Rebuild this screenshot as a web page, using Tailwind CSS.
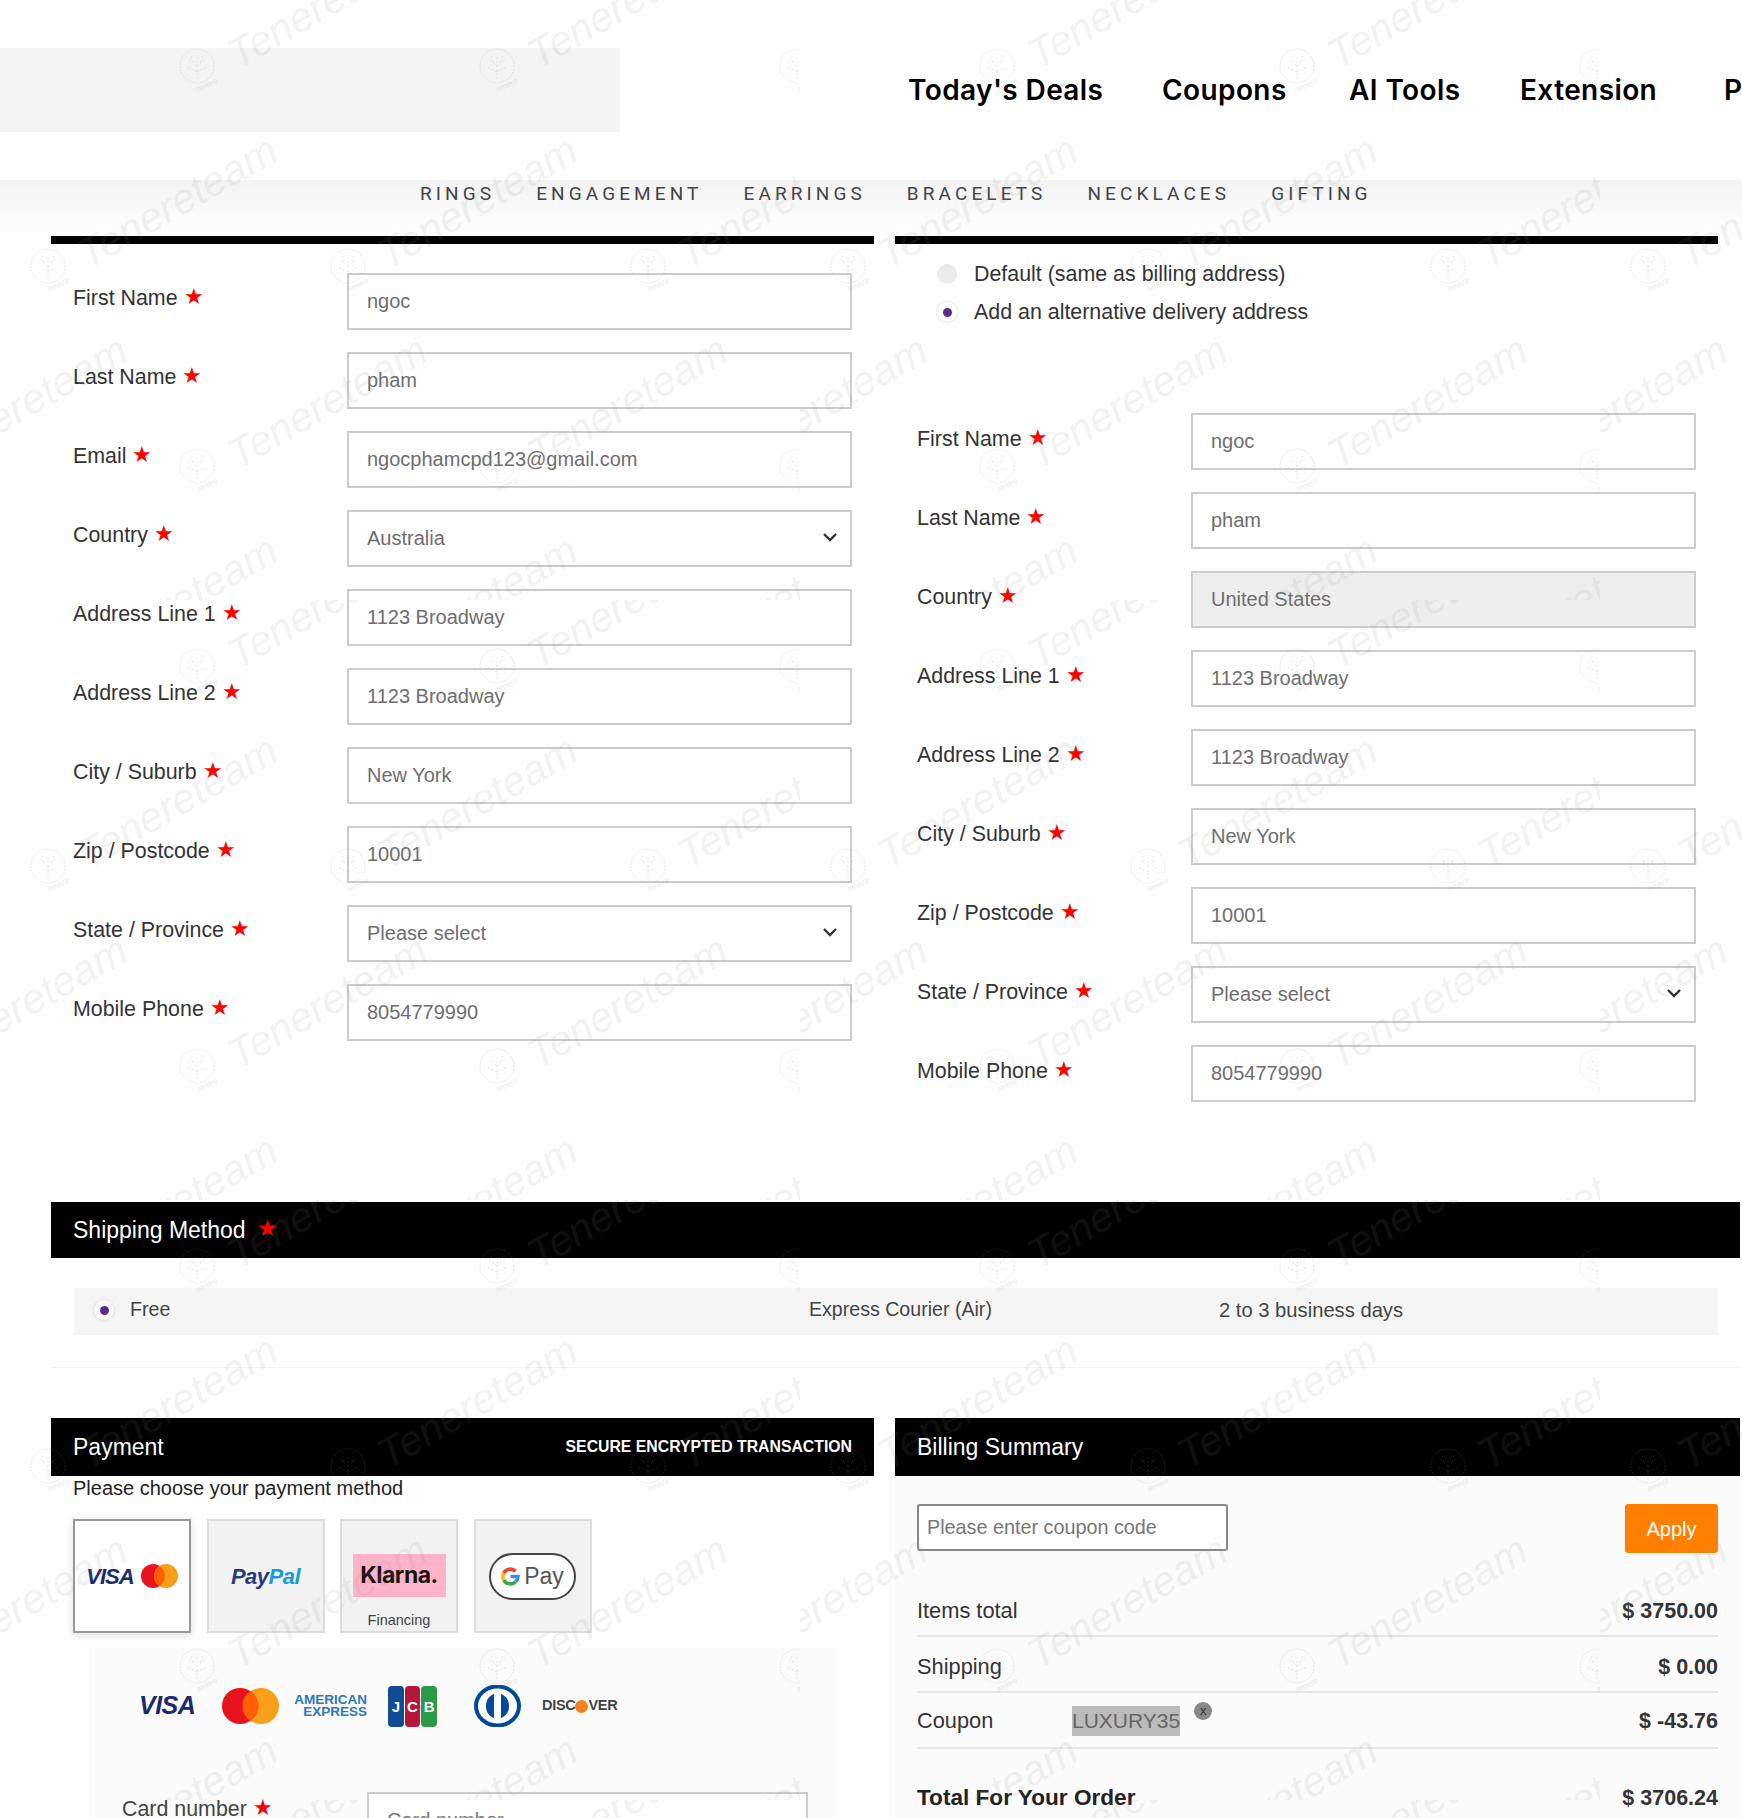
<!DOCTYPE html>
<html lang="en">
<head>
  <meta charset="UTF-8" />
  <title>Checkout</title>
  <script src="https://cdn.jsdelivr.net/npm/@tailwindcss/browser@4"></script>
</head>
<body class="relative w-[1742px] h-[1818px] overflow-hidden bg-white text-[#333] font-['Liberation_Sans',Arial,sans-serif] text-[20px]">

  <!-- Top header -->
  <header class="flex h-[180px] whitespace-nowrap">
    <div class="w-[620px] h-[84px] mt-[48px] shrink-0 bg-[#f4f4f4]"></div>
    <nav class="flex gap-[60px] ml-[288px] pt-[70px] font-['Inter',sans-serif] font-semibold text-[28px] tracking-[0.4px] leading-[40px] text-black">
      <a class="w-[194px]">Today's Deals</a>
      <a class="w-[127px]">Coupons</a>
      <a class="w-[111px]">AI Tools</a>
      <a class="w-[144px]">Extension</a>
      <a>P</a>
    </nav>
  </header>

  <!-- Category nav -->
  <div class="h-[56px] bg-gradient-to-b from-[#f3f3f3] to-white flex gap-[41px] pl-[420px] pt-[2px] font-['Roboto',sans-serif] text-[19px] leading-[24px] tracking-[4.1px] text-[#444]">
    <a>RINGS</a><a>ENGAGEMENT</a><a>EARRINGS</a><a>BRACELETS</a><a>NECKLACES</a><a>GIFTING</a>
  </div>

  <!-- Billing + delivery address -->
  <div class="flex gap-[21px] pl-[51px]">
    <section class="w-[823px] border-t-8 border-black pt-[29px] pl-[22px] flex flex-col gap-[22px]">
      <div class="flex"><label class="w-[274px] text-[21.4px] leading-[50px]">First Name <span class="relative -top-[1px] text-[22px] leading-none text-[#f00]">★</span></label><input value="ngoc" class="w-[505px] h-[57px] border-2 border-[#ccc] px-[18px] text-[#6e6e6e]" /></div>
      <div class="flex"><label class="w-[274px] text-[21.4px] leading-[50px]">Last Name <span class="relative -top-[1px] text-[22px] leading-none text-[#f00]">★</span></label><input value="pham" class="w-[505px] h-[57px] border-2 border-[#ccc] px-[18px] text-[#6e6e6e]" /></div>
      <div class="flex"><label class="w-[274px] text-[21.4px] leading-[50px]">Email <span class="relative -top-[1px] text-[22px] leading-none text-[#f00]">★</span></label><input value="ngocphamcpd123@gmail.com" class="w-[505px] h-[57px] border-2 border-[#ccc] px-[18px] text-[#6e6e6e]" /></div>
      <div class="flex"><label class="w-[274px] text-[21.4px] leading-[50px]">Country <span class="relative -top-[1px] text-[22px] leading-none text-[#f00]">★</span></label>
        <div class="relative w-[505px] h-[57px] border-2 border-[#ccc] px-[18px] leading-[53px] text-[#6e6e6e]">Australia
          <svg class="absolute right-[12px] top-[19px] w-[16px] h-[12px]" viewBox="0 0 16 12" fill="none" stroke="#333" stroke-width="2.4"><path d="M2 3l6 6 6-6" /></svg>
        </div>
      </div>
      <div class="flex"><label class="w-[274px] text-[21.4px] leading-[50px]">Address Line 1 <span class="relative -top-[1px] text-[22px] leading-none text-[#f00]">★</span></label><input value="1123 Broadway" class="w-[505px] h-[57px] border-2 border-[#ccc] px-[18px] text-[#6e6e6e]" /></div>
      <div class="flex"><label class="w-[274px] text-[21.4px] leading-[50px]">Address Line 2 <span class="relative -top-[1px] text-[22px] leading-none text-[#f00]">★</span></label><input value="1123 Broadway" class="w-[505px] h-[57px] border-2 border-[#ccc] px-[18px] text-[#6e6e6e]" /></div>
      <div class="flex"><label class="w-[274px] text-[21.4px] leading-[50px]">City / Suburb <span class="relative -top-[1px] text-[22px] leading-none text-[#f00]">★</span></label><input value="New York" class="w-[505px] h-[57px] border-2 border-[#ccc] px-[18px] text-[#6e6e6e]" /></div>
      <div class="flex"><label class="w-[274px] text-[21.4px] leading-[50px]">Zip / Postcode <span class="relative -top-[1px] text-[22px] leading-none text-[#f00]">★</span></label><input value="10001" class="w-[505px] h-[57px] border-2 border-[#ccc] px-[18px] text-[#6e6e6e]" /></div>
      <div class="flex"><label class="w-[274px] text-[21.4px] leading-[50px]">State / Province <span class="relative -top-[1px] text-[22px] leading-none text-[#f00]">★</span></label>
        <div class="relative w-[505px] h-[57px] border-2 border-[#ccc] px-[18px] leading-[53px] text-[#6e6e6e]">Please select
          <svg class="absolute right-[12px] top-[19px] w-[16px] h-[12px]" viewBox="0 0 16 12" fill="none" stroke="#333" stroke-width="2.4"><path d="M2 3l6 6 6-6" /></svg>
        </div>
      </div>
      <div class="flex"><label class="w-[274px] text-[21.4px] leading-[50px]">Mobile Phone <span class="relative -top-[1px] text-[22px] leading-none text-[#f00]">★</span></label><input value="8054779990" class="w-[505px] h-[57px] border-2 border-[#ccc] px-[18px] text-[#6e6e6e]" /></div>
    </section>

    <section class="w-[823px] border-t-8 border-black pt-[11px] pl-[22px]">
      <div class="flex items-center h-[38px] pl-[20px] gap-[17px] text-[21.4px]"><span class="w-[20px] h-[20px] rounded-full bg-[#ebebeb]"></span>Default (same as billing address)</div>
      <div class="flex items-center h-[38px] pl-[20px] gap-[17px] text-[21.4px]"><span class="w-[20px] h-[20px] rounded-full bg-white shadow-[0_0_3px_#ccc] flex items-center justify-center"><span class="w-[9px] h-[9px] rounded-full bg-[#5b2d90]"></span></span>Add an alternative delivery address</div>
      <div class="flex flex-col gap-[22px] mt-[82px]">
        <div class="flex"><label class="w-[274px] text-[21.4px] leading-[52px]">First Name <span class="relative -top-[1px] text-[22px] leading-none text-[#f00]">★</span></label><input value="ngoc" class="w-[505px] h-[57px] border-2 border-[#ccc] px-[18px] text-[#6e6e6e]" /></div>
        <div class="flex"><label class="w-[274px] text-[21.4px] leading-[52px]">Last Name <span class="relative -top-[1px] text-[22px] leading-none text-[#f00]">★</span></label><input value="pham" class="w-[505px] h-[57px] border-2 border-[#ccc] px-[18px] text-[#6e6e6e]" /></div>
        <div class="flex"><label class="w-[274px] text-[21.4px] leading-[52px]">Country <span class="relative -top-[1px] text-[22px] leading-none text-[#f00]">★</span></label><input value="United States" disabled class="w-[505px] h-[57px] border-2 border-[#ccc] bg-[#eee] px-[18px] text-[#6e6e6e]" /></div>
        <div class="flex"><label class="w-[274px] text-[21.4px] leading-[52px]">Address Line 1 <span class="relative -top-[1px] text-[22px] leading-none text-[#f00]">★</span></label><input value="1123 Broadway" class="w-[505px] h-[57px] border-2 border-[#ccc] px-[18px] text-[#6e6e6e]" /></div>
        <div class="flex"><label class="w-[274px] text-[21.4px] leading-[52px]">Address Line 2 <span class="relative -top-[1px] text-[22px] leading-none text-[#f00]">★</span></label><input value="1123 Broadway" class="w-[505px] h-[57px] border-2 border-[#ccc] px-[18px] text-[#6e6e6e]" /></div>
        <div class="flex"><label class="w-[274px] text-[21.4px] leading-[52px]">City / Suburb <span class="relative -top-[1px] text-[22px] leading-none text-[#f00]">★</span></label><input value="New York" class="w-[505px] h-[57px] border-2 border-[#ccc] px-[18px] text-[#6e6e6e]" /></div>
        <div class="flex"><label class="w-[274px] text-[21.4px] leading-[52px]">Zip / Postcode <span class="relative -top-[1px] text-[22px] leading-none text-[#f00]">★</span></label><input value="10001" class="w-[505px] h-[57px] border-2 border-[#ccc] px-[18px] text-[#6e6e6e]" /></div>
        <div class="flex"><label class="w-[274px] text-[21.4px] leading-[52px]">State / Province <span class="relative -top-[1px] text-[22px] leading-none text-[#f00]">★</span></label>
          <div class="relative w-[505px] h-[57px] border-2 border-[#ccc] px-[18px] leading-[53px] text-[#6e6e6e]">Please select
            <svg class="absolute right-[12px] top-[19px] w-[16px] h-[12px]" viewBox="0 0 16 12" fill="none" stroke="#333" stroke-width="2.4"><path d="M2 3l6 6 6-6" /></svg>
          </div>
        </div>
        <div class="flex"><label class="w-[274px] text-[21.4px] leading-[52px]">Mobile Phone <span class="relative -top-[1px] text-[22px] leading-none text-[#f00]">★</span></label><input value="8054779990" class="w-[505px] h-[57px] border-2 border-[#ccc] px-[18px] text-[#6e6e6e]" /></div>
      </div>
    </section>
  </div>

  <!-- Shipping method -->
  <div class="ml-[51px] w-[1689px] mt-[100px] h-[56px] bg-black text-white text-[23px] leading-[56px] pl-[22px]">Shipping Method <span class="relative -top-[2px] ml-[5px] text-[23px] leading-none text-[#f00]">★</span></div>
  <div class="ml-[74px] w-[1644px] mt-[30px] h-[47px] pb-[3px] bg-[#f5f5f5] flex items-center text-[19.6px] text-[#444]">
    <span class="ml-[20px] w-[20px] h-[20px] rounded-full bg-white shadow-[0_0_3px_#ccc] flex items-center justify-center"><span class="w-[9px] h-[9px] rounded-full bg-[#5b2d90]"></span></span>
    <span class="ml-[16px] w-[679px]">Free</span>
    <span class="w-[410px]">Express Courier (Air)</span>
    <span class="text-[20.2px]">2 to 3 business days</span>
  </div>
  <div class="ml-[51px] w-[1689px] mt-[32px] h-px bg-[#f3f3f3]"></div>

  <!-- Payment + billing summary -->
  <div class="flex gap-[21px] pl-[51px] mt-[50px]">
    <section class="w-[823px]">
      <div class="h-[58px] bg-black text-white flex items-center justify-between pl-[22px] pr-[22px]">
        <span class="text-[23px]">Payment</span>
        <span class="text-[15.8px] font-bold">SECURE ENCRYPTED TRANSACTION</span>
      </div>
      <p class="pl-[22px] leading-[24px] text-[#222]">Please choose your payment method</p>

      <div class="flex gap-[15.5px] ml-[22px] mt-[19px]">
        <div class="w-[118px] h-[114px] border-2 border-[#999] bg-white shadow-[0_2px_8px_#ddd] flex items-center justify-center gap-[7px]">
          <span class="italic font-bold text-[22px] tracking-[-1px] text-[#1a2a6c]">VISA</span>
          <svg class="w-[37px] h-[24px]" viewBox="0 0 37 24"><circle cx="12" cy="12" r="12" fill="#e8131c" /><circle cx="25" cy="12" r="12" fill="#f79e1b" /><path d="M18.5 2a12 12 0 0 1 0 20 12 12 0 0 1 0-20z" fill="#ff5f00" /></svg>
        </div>
        <div class="w-[118px] h-[114px] border-2 border-[#ddd] bg-[#f2f2f2] flex items-center justify-center italic font-bold text-[22px] tracking-[-0.5px]">
          <span class="text-[#253b80]">Pay</span><span class="text-[#179bd7]">Pal</span>
        </div>
        <div class="w-[118px] h-[114px] border-2 border-[#ddd] bg-[#f2f2f2] flex flex-col items-center pt-[33px]">
          <span class="w-[93px] h-[43px] bg-[#ffb3c7] flex items-center justify-center font-['Inter',sans-serif] font-bold text-[23px] tracking-[-0.5px] text-[#17120f]">Klarna.</span>
          <span class="mt-[14px] text-[14.5px] leading-[18px] text-[#444]">Financing</span>
        </div>
        <div class="w-[118px] h-[114px] border-2 border-[#ddd] bg-[#f2f2f2] flex items-center justify-center">
          <span class="w-[87px] h-[47px] rounded-full border-2 border-[#444] bg-white flex items-center justify-center gap-[4px] text-[23px] text-[#555]">
            <svg class="w-[19px] h-[19px]" viewBox="0 0 24 24" fill="none" stroke-width="4.5">
              <path d="M12 12h9.5a9.5 9.5 0 0 1-3 6.5" stroke="#4285f4" />
              <path d="M18.5 18.5A9.5 9.5 0 0 1 3.5 16.5" stroke="#34a853" />
              <path d="M3.5 16.5a9.5 9.5 0 0 1 0-9" stroke="#fbbc04" />
              <path d="M3.5 7.5A9.5 9.5 0 0 1 18.5 5.5" stroke="#ea4335" />
            </svg>
            Pay
          </span>
        </div>
      </div>

      <div class="ml-[44px] w-[741px] mt-[15px] h-[300px] bg-[#fbfbfb]">
        <div class="flex items-center h-[42px] pt-[37px] pl-[44px] box-content">
          <span class="italic font-bold text-[25px] tracking-[-0.5px] text-[#1a2a6c] w-[83px]">VISA</span>
          <svg class="w-[57px] h-[36px] shrink-0" viewBox="0 0 57 36"><circle cx="18" cy="18" r="18" fill="#e8131c" /><circle cx="39" cy="18" r="18" fill="#f79e1b" /><path d="M28.5 3a18 18 0 0 1 0 30 18 18 0 0 1 0-30z" fill="#ff5f00" /></svg>
          <span class="ml-[15px] w-[73px] shrink-0 text-right font-bold text-[13.5px] leading-[12px] text-[#2e77bc]">AMERICAN<br />EXPRESS</span>
          <span class="ml-[21px] flex h-[41px] w-[49px] shrink-0 gap-px text-center font-bold text-[15px] leading-[41px] text-white">
            <span class="flex-1 rounded-[4px] bg-[#0e4c96]">J</span>
            <span class="flex-1 rounded-[4px] bg-[#b7163b]">C</span>
            <span class="flex-1 rounded-[4px] bg-[#2a9a45]">B</span>
          </span>
          <svg class="ml-[37px] w-[47px] h-[42px] shrink-0" viewBox="0 0 47 42"><ellipse cx="23.5" cy="21" rx="21.5" ry="19.5" fill="#fff" stroke="#004a97" stroke-width="4" /><path d="M20 9c-5 2-8 6-8 12s3 10 8 12zM27 9c5 2 8 6 8 12s-3 10-8 12z" fill="#004a97" /></svg>
          <span class="ml-[21px] flex items-center font-bold text-[14.5px] tracking-[-0.3px] text-[#444]">DISC<span class="w-[13px] h-[13px] rounded-full bg-[#f58220]"></span>VER</span>
        </div>
        <div class="flex mt-[65px] pl-[27px]">
          <label class="w-[245px] text-[21.4px] leading-[34px] text-[#444]">Card number <span class="relative -top-[1px] text-[22px] leading-none text-[#f00]">★</span></label>
          <input placeholder="Card number" class="w-[441px] h-[56px] border-2 border-[#ccc] bg-white px-[18px] text-[#666] placeholder:text-[#777]" />
        </div>
      </div>
    </section>

    <section class="w-[845px]">
      <div class="h-[58px] bg-black text-white flex items-center pl-[22px] text-[23px]">Billing Summary</div>
      <div class="h-[400px] bg-[#fbfbfb] px-[22px] pt-[28px]">
        <div class="flex justify-between">
          <input placeholder="Please enter coupon code" class="w-[311px] h-[47px] rounded-[3px] border-2 border-[#888] bg-white px-[8px] text-[19.8px] placeholder:text-[#777]" />
          <button class="w-[93px] h-[49px] rounded-[3px] bg-[#ff8000] text-white">Apply</button>
        </div>
        <div class="mt-[28px] text-[21.8px]">
          <div class="flex justify-between items-center h-[56px] pt-[6px] border-b-2 border-[#e5e5e5]"><span>Items total</span><b class="text-[21.5px]">$ 3750.00</b></div>
          <div class="flex justify-between items-center h-[56px] pt-[6px] border-b-2 border-[#e5e5e5]"><span>Shipping</span><b class="text-[21.5px]">$ 0.00</b></div>
          <div class="flex items-center h-[56px] pt-[2px] border-b-2 border-[#e5e5e5]">
            <span class="w-[155px]">Coupon</span>
            <span class="h-[30px] leading-[30px] bg-[#bbb] text-[#666] text-[21px]">LUXURY35</span>
            <span class="relative -top-[10px] ml-[14px] w-[18px] h-[18px] rounded-full bg-[#888] text-[#333] text-[13px] leading-[17px] text-center">x</span>
            <b class="ml-auto text-[21.5px]">$ -43.76</b>
          </div>
          <div class="flex justify-between items-center mt-[32px] font-bold"><span class="text-[22.6px] text-[#222]">Total For Your Order</span><span class="text-[21.5px]">$ 3706.24</span></div>
        </div>
      </div>
    </section>
  </div>

  <!-- Watermark: 800x600 tile, text gets clipped at the tile edges -->
  <svg class="absolute inset-0 w-full h-full pointer-events-none" aria-hidden="true">
    <defs>
      <g id="wm-logo" fill="none" stroke="#888" stroke-width="1">
        <circle r="17" stroke-dasharray="2 1" />
        <path d="M0 13V-9M0 0l-8-7M0 0l8-7M0 6l-10-5M0 6l10-5M-4-4l-2-8M4-4l2-8" stroke-dasharray="2 2" />
        <text x="1" y="26" transform="rotate(-25 1 26)" fill="#888" stroke="none" font-size="8" font-style="italic">tenere</text>
      </g>
      <pattern id="wm" x="0" y="0" width="800" height="600" patternUnits="userSpaceOnUse">
        <g font-family="Liberation Sans" font-style="italic" font-size="42" fill="#888" fill-opacity="0.11">
          <text transform="translate(238 70) rotate(-30)">Tenereteam</text>
          <text transform="translate(538 70) rotate(-30)">Tenereteam</text>
          <text transform="translate(88 270) rotate(-30)">Tenereteam</text>
          <text transform="translate(388 270) rotate(-30)">Tenereteam</text>
          <text transform="translate(688 270) rotate(-30)">Tenereteam</text>
          <text transform="translate(-62 470) rotate(-30)">Tenereteam</text>
          <text transform="translate(238 470) rotate(-30)">Tenereteam</text>
          <text transform="translate(538 470) rotate(-30)">Tenereteam</text>
          <text transform="translate(88 670) rotate(-30)">Tenereteam</text>
          <text transform="translate(388 670) rotate(-30)">Tenereteam</text>
          <text transform="translate(688 670) rotate(-30)">Tenereteam</text>
        </g>
        <g opacity="0.2">
          <use href="#wm-logo" x="197" y="66" />
          <use href="#wm-logo" x="497" y="66" />
          <use href="#wm-logo" x="797" y="66" />
          <use href="#wm-logo" x="48" y="266" />
          <use href="#wm-logo" x="348" y="266" />
          <use href="#wm-logo" x="648" y="266" />
          <use href="#wm-logo" x="197" y="466" />
          <use href="#wm-logo" x="497" y="466" />
          <use href="#wm-logo" x="797" y="466" />
        </g>
      </pattern>
    </defs>
    <rect width="100%" height="100%" fill="url(#wm)" />
  </svg>
</body>
</html>
